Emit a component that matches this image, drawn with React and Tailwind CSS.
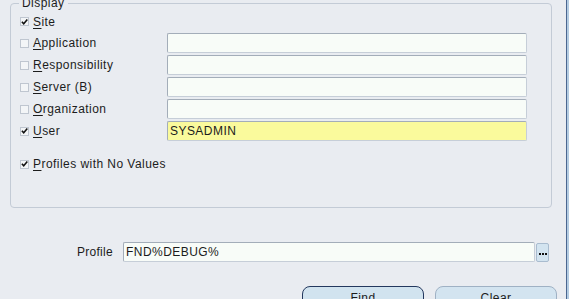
const font = { fontFamily: '"Liberation Sans", Arial, sans-serif' };

const Check = ({ checked }) => (
  <span className="flex h-[9px] w-[9px] shrink-0 items-center justify-center border border-[#bfc6d0] bg-[#f3f5f7]">
    {checked && (
      <svg width="8" height="8" viewBox="0 0 8 8">
        <path d="M1 3.6 L3.1 6 L7.2 1.2" fill="none" stroke="#111" strokeWidth="1.8" />
      </svg>
    )}
  </span>
);

const Label = ({ first, rest }) => (
  <span className="text-[12px] leading-[14px] tracking-[0.45px] text-[#1c1c1c]">
    <span className="underline underline-offset-2">{first}</span>
    {rest}
  </span>
);

const Field = ({ value, yellow, width = "w-[360px]" }) => (
  <div
    className={`${width} flex h-[20px] items-center rounded-[2px] border border-[#a3adb9] border-b-[#c6ced8] border-r-[#c6ced8] pl-[2px] text-[12px] tracking-[0.45px] text-[#1c1c1c] ${
      yellow ? "bg-[#fafa9c]" : "bg-[#f8fcf8]"
    }`}
  >
    {value}
  </div>
);

const Row = ({ checked, first, rest, value, yellow }) => (
  <div className="flex h-[20px] items-center">
    <div className="flex w-[147px] items-center gap-[4px]">
      <Check checked={checked} />
      <Label first={first} rest={rest} />
    </div>
    <Field value={value} yellow={yellow} />
  </div>
);

export default function App() {
  return (
    <div className="flex h-[299px] w-[569px] overflow-hidden bg-[#e9ecf1]" style={font}>
      <div className="flex w-[566px] flex-col">
        <fieldset className="ml-[10px] mt-[-4px] h-[212px] w-[542px] shrink-0 rounded-[4px] border border-[#c3cbd6] pl-[9px]">
          <legend className="ml-[-1px] px-[3px] text-[12px] leading-[14px] tracking-[0.45px] text-[#1c1c1c]">
            Display
          </legend>
          <div className="flex h-[23px] items-center gap-[4px]">
            <Check checked />
            <Label first="S" rest="ite" />
          </div>
          <div className="flex flex-col gap-[2px]">
            <Row first="A" rest="pplication" />
            <Row first="R" rest="esponsibility" />
            <Row first="S" rest="erver (B)" />
            <Row first="O" rest="rganization" />
            <Row checked first="U" rest="ser" value="SYSADMIN" yellow />
          </div>
          <div className="mt-[13px] flex h-[20px] items-center gap-[4px]">
            <Check checked />
            <Label first="P" rest="rofiles with No Values" />
          </div>
        </fieldset>

        <div className="mt-[34px] flex h-[20px] shrink-0 items-center">
          <div className="w-[113px] text-right text-[12px] tracking-[0.3px] text-[#1c1c1c]">Profile</div>
          <div className="ml-[10px]">
            <Field value="FND%DEBUG%" width="w-[412px]" />
          </div>
          <button className="ml-[1px] flex h-[19px] w-[13px] items-end justify-center rounded-[2px] border border-[#a9bccf] bg-[#d3e4f0] pb-[6px]">
            <span className="flex gap-[1px]">
              <span className="h-[2px] w-[2px] bg-[#111]" />
              <span className="h-[2px] w-[2px] bg-[#111]" />
              <span className="h-[2px] w-[2px] bg-[#111]" />
            </span>
          </button>
        </div>

        <div className="mt-[24px] flex shrink-0 justify-end gap-[11px] pr-[9px]">
          <button className="h-[26px] w-[122px] shrink-0 rounded-[8px] border-[1.5px] border-[#24395f] bg-[#d1e3ef] pb-[3px] text-[12px] tracking-[0.45px] text-[#1c1c1c]">
            Find
          </button>
          <button className="h-[26px] w-[122px] shrink-0 rounded-[8px] border border-[#9fb1c4] bg-[#d3e4f0] pb-[3px] text-[12px] tracking-[0.45px] text-[#1c1c1c]">
            Clear
          </button>
        </div>
      </div>
      <div className="w-[1px] bg-[#4a6690]" />
      <div className="w-[2px] bg-[#b4cce2]" />
    </div>
  );
}
